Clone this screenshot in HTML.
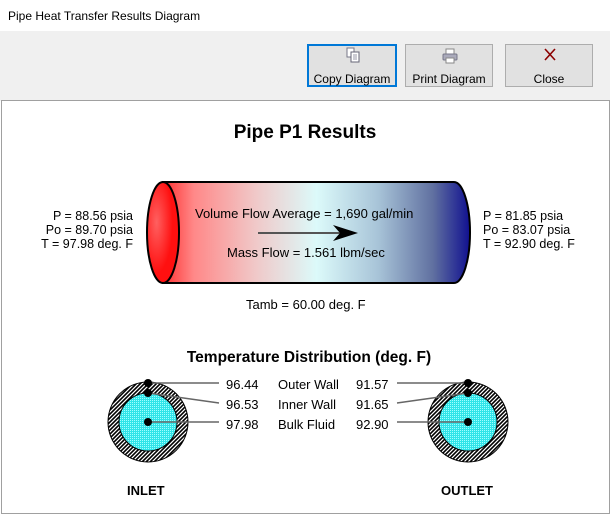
<!DOCTYPE html>
<html><head><style>
body{margin:0;width:610px;height:513px;overflow:hidden;background:#fff;font-family:"Liberation Sans",Arial,sans-serif;position:relative}
.tb{position:absolute;left:0;top:0;width:610px;height:31px;background:#fff;font-size:12px}
.tb span{position:absolute;left:8px;top:9px}
.bar{position:absolute;left:0;top:31px;width:610px;height:70px;background:#f0f0f0}
.btn{position:absolute;top:44px;width:88px;height:43px;background:#e1e1e1;border:1px solid #adadad;font-size:12px;text-align:center;box-sizing:border-box}
.btn .l{position:absolute;left:0;right:0;top:27px}
.panel{position:absolute;left:1px;top:100px;width:607px;height:412px;border:1px solid #a0a0a0;background:#fff}
.t{position:absolute;font-size:13px;white-space:nowrap}
</style></head><body>
<div class="tb"><span>Pipe Heat Transfer Results Diagram</span></div>
<div class="bar"></div>
<div class="btn" style="left:307px;width:90px;border:2px solid #0078d7"><svg style="position:absolute;left:36px;top:1px" width="16" height="16"><rect x="2" y="1" width="7" height="9" fill="#fff" stroke="#778"/><rect x="6" y="5" width="8" height="10" fill="#fff" stroke="#667"/><path d="M8 8h4M8 10h4M8 12h4" stroke="#99a"/></svg><div class="l" style="top:26px">Copy Diagram</div></div>
<div class="btn" style="left:405px"><svg style="position:absolute;left:36px;top:3px" width="16" height="16"><rect x="4" y="1" width="8" height="5" fill="#fff" stroke="#888"/><rect x="1" y="6" width="14" height="6" rx="1" fill="#aab" stroke="#778"/><rect x="4" y="10" width="8" height="5" fill="#fff" stroke="#888"/></svg><div class="l">Print Diagram</div></div>
<div class="btn" style="left:505px"><svg style="position:absolute;left:37px;top:3px" width="14" height="14"><path d="M2 1L12 12M12 1L2 12" stroke="#8b0000" stroke-width="1.6"/></svg><div class="l">Close</div></div>
<div class="panel"></div>
<svg style="position:absolute;left:0;top:0" width="610" height="513">
<defs>
<linearGradient id="g" x1="0" x2="1"><stop offset="0" stop-color="#ff3030"/><stop offset=".1" stop-color="#f88"/><stop offset=".3" stop-color="#f0c8c8"/><stop offset=".5" stop-color="#dcfafa"/><stop offset=".7" stop-color="#a8c4d8"/><stop offset=".88" stop-color="#6070a0"/><stop offset="1" stop-color="#101090"/></linearGradient>
<radialGradient id="r" cx=".3" cy=".4"><stop offset="0" stop-color="#ff6060"/><stop offset="1" stop-color="#ff1010"/></radialGradient>
<pattern id="h" width="4" height="4" patternUnits="userSpaceOnUse"><rect width="4" height="4" fill="#fff"/><path d="M-1 5L5 -1M-1 1L1 -1M3 5L5 3" stroke="#000" stroke-width="1.6"/></pattern>
<pattern id="d" width="2" height="2" patternUnits="userSpaceOnUse"><rect width="2" height="2" fill="#30e4e8"/><rect width="1" height="1" fill="#a0ffff"/></pattern>
</defs>
<path d="M163 182H454A16 50.5 0 0 1 454 283H163Z" fill="url(#g)" stroke="#000" stroke-width="2"/>
<ellipse cx="163" cy="232.5" rx="16" ry="50.5" fill="url(#r)" stroke="#000" stroke-width="2"/>
<line x1="258" y1="233" x2="340" y2="233" stroke="#555" stroke-width="2"/>
<path d="M333 225L358 233L333 241L340 233Z" fill="#000"/>
<g>
<circle cx="148" cy="422" r="40" fill="url(#h)" stroke="#000"/>
<circle cx="148" cy="422" r="29" fill="url(#d)" stroke="#000"/>
<circle cx="468" cy="422" r="40" fill="url(#h)" stroke="#000"/>
<circle cx="468" cy="422" r="29" fill="url(#d)" stroke="#000"/>
<g stroke="#666" stroke-width="1.5">
<line x1="148" y1="383" x2="219" y2="383"/><line x1="148" y1="393" x2="219" y2="403"/><line x1="148" y1="422" x2="219" y2="422"/>
<line x1="397" y1="383" x2="468" y2="383"/><line x1="397" y1="403" x2="468" y2="393"/><line x1="397" y1="422" x2="468" y2="422"/>
</g>
<g fill="#000"><circle cx="148" cy="383" r="4"/><circle cx="148" cy="393" r="4"/><circle cx="148" cy="422" r="4"/><circle cx="468" cy="383" r="4"/><circle cx="468" cy="393" r="4"/><circle cx="468" cy="422" r="4"/></g>
</g>
</svg>
<div class="t" style="left:0;width:610px;text-align:center;top:122px;font-size:19px;font-weight:bold">Pipe P1 Results</div>
<div class="t" style="right:477px;top:209px;line-height:14px;text-align:right;font-size:12.5px">P = 88.56 psia<br>Po = 89.70 psia<br>T = 97.98 deg. F</div>
<div class="t" style="left:483px;top:209px;line-height:14px;font-size:12.5px">P = 81.85 psia<br>Po = 83.07 psia<br>T = 92.90 deg. F</div>
<div class="t" style="left:195px;top:206px">Volume Flow Average = 1,690 gal/min</div>
<div class="t" style="left:227px;top:245px">Mass Flow = 1.561 lbm/sec</div>
<div class="t" style="left:246px;top:297px">Tamb = 60.00 deg. F</div>
<div class="t" style="left:4px;width:610px;text-align:center;top:349px;font-size:15.5px;font-weight:bold">Temperature Distribution (deg. F)</div>
<div class="t" style="left:226px;top:375px;line-height:20px">96.44<br>96.53<br>97.98</div>
<div class="t" style="left:278px;top:375px;line-height:20px">Outer Wall<br>Inner Wall<br>Bulk Fluid</div>
<div class="t" style="left:356px;top:375px;line-height:20px">91.57<br>91.65<br>92.90</div>
<div class="t" style="left:127px;top:483px;font-weight:bold">INLET</div>
<div class="t" style="left:441px;top:483px;font-weight:bold">OUTLET</div>
</body></html>
